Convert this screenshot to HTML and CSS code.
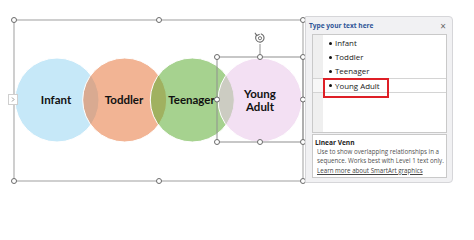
FILE: index.html
```
<!DOCTYPE html>
<html lang="en">
<head>
<meta charset="utf-8">
<title>Linear Venn SmartArt</title>
<link rel="stylesheet" href="styles.css">
</head>
<body>
<div class="stage">
  <svg class="canvas" width="474" height="216" viewBox="0 0 474 216">
    <g class="venn">
      <circle class="c-infant" cx="57" cy="100" r="42"/>
      <circle class="c-toddler" cx="124.7" cy="100" r="42"/>
      <circle class="c-teen" cx="192.3" cy="100" r="42"/>
      <circle class="c-young" cx="260" cy="100" r="42"/>
    </g>
    <g class="labels">
      <text x="56" y="104">Infant</text>
      <text x="124" y="104">Toddler</text>
      <text x="191.5" y="104">Teenager</text>
      <text x="260" y="97.5">Young</text>
      <text x="260" y="110.5">Adult</text>
    </g>
    <rect class="outer-box" x="14" y="20" width="289" height="161"/>
    <rect class="inner-box" x="217" y="57" width="86" height="85"/>
    <line class="rot-line" x1="260" y1="44" x2="260" y2="57"/>
    <g class="rot-icon">
      <path d="M256.6 35.2 A4.2 4.2 0 1 0 261.2 33.9"/>
      <path d="M255.2 33.2 L256.8 35.6 L259.2 34.4"/>
      <circle cx="260" cy="38.2" r="1.6"/>
    </g>
    <g class="handles">
      <circle cx="14" cy="20" r="2.5"/>
      <circle cx="159" cy="20" r="2.5"/>
      <circle cx="303" cy="20" r="2.5"/>
      <circle cx="14" cy="181" r="2.5"/>
      <circle cx="159" cy="181" r="2.5"/>
      <circle cx="303" cy="181" r="2.5"/>
      <circle cx="217" cy="57" r="2.5"/>
      <circle cx="260" cy="57" r="2.5"/>
      <circle cx="303" cy="57" r="2.5"/>
      <circle cx="217" cy="99.5" r="2.5"/>
      <circle cx="303" cy="99.5" r="2.5"/>
      <circle cx="217" cy="142" r="2.5"/>
      <circle cx="260" cy="142" r="2.5"/>
      <circle cx="303" cy="142" r="2.5"/>
    </g>
    <rect class="side-btn" x="8.5" y="94.5" width="9" height="10"/>
    <path class="side-chev" d="M12 97.5 L14 99.5 L12 101.5"/>
  </svg>

  <aside class="pane">
    <header class="pane-head">
      <span class="pane-title">Type your text here</span>
      <span class="pane-close">×</span>
    </header>
    <div class="text-area">
      <ul class="bullets">
        <li class="row">Infant</li>
        <li class="row">Toddler</li>
        <li class="row">Teenager</li>
        <li class="row row-active"><span class="sel">Young Adult</span></li>
      </ul>
    </div>
    <div class="desc">
      <div class="desc-title">Linear Venn</div>
      <p class="desc-text">Use to show overlapping relationships in a<br>sequence. Works best with Level 1 text only.</p>
      <a class="desc-link" href="#">Learn more about SmartArt graphics</a>
    </div>
  </aside>
</div>
</body>
</html>
```

FILE: styles.css
```
* { box-sizing: border-box; }
html, body { margin: 0; padding: 0; background: #ffffff; }
.stage { position: relative; width: 474px; height: 216px; overflow: hidden; }
.canvas { display: block; }

.venn circle { stroke: #ffffff; stroke-width: 1; fill-opacity: 0.56; }
.c-infant { fill: #9ad6f3; }
.c-toddler { fill: #e87940; }
.c-teen { fill: #60af37; }
.c-young { fill: #eac8ea; }

.labels text {
  font-family: "Lato", "Liberation Sans", sans-serif;
  font-weight: 700;
  font-size: 11.5px;
  fill: #111111;
  text-anchor: middle;
}

.outer-box { fill: none; stroke: #c3c3c3; stroke-width: 1.6; }
.inner-box { fill: none; stroke: #8f8f8f; stroke-width: 1; }
.rot-line { stroke: #8f8f8f; stroke-width: 1; }
.rot-icon path { fill: none; stroke: #6a6a6a; stroke-width: 1.1; stroke-linecap: round; stroke-linejoin: round; }
.rot-icon circle { fill: none; stroke: #6a6a6a; stroke-width: 0.9; }
.handles circle { fill: #ffffff; stroke: #6b6b6b; stroke-width: 1; }
.side-btn { fill: #ffffff; stroke: #cfcfcf; stroke-width: 1; }
.side-chev { fill: none; stroke: #8a8a8a; stroke-width: 0.9; }

.pane {
  position: absolute;
  left: 305px;
  top: 16px;
  width: 148px;
  height: 167px;
  background: #f1f1f3;
  border: 1px solid #d6d6d9;
  border-radius: 1px 4px 4px 1px;
  display: flex;
  flex-direction: column;
  padding: 0 5px 4px 6px;
  font-family: "Open Sans", "Liberation Sans", sans-serif;
}
.pane-head {
  flex: 0 0 17px;
  display: flex;
  align-items: center;
  justify-content: space-between;
  margin-left: -3px;
}
.pane-title { font-size: 6.6px; font-weight: 700; color: #2f5597; }
.pane-close { font-size: 10px; color: #666666; line-height: 1; margin-right: 1px; }

.text-area {
  flex: 0 0 99px;
  background: linear-gradient(to right, #efefef 0, #efefef 10px, #ffffff 10px);
  border: 1px solid #c9c9c9;
  padding-top: 1px;
}
.bullets { list-style: none; margin: 0; padding: 0; }
.row {
  position: relative;
  height: 14px;
  display: flex;
  align-items: center;
  padding-left: 22px;
  font-size: 7.9px;
  color: #222222;
}
.row::before {
  content: "";
  position: absolute;
  left: 15.5px;
  top: 5.5px;
  width: 3px;
  height: 3px;
  border-radius: 50%;
  background: #111111;
}
.row-active {
  height: 15px;
  border-top: 1px solid #d4d4d4;
  border-bottom: 1px solid #d4d4d4;
  background: linear-gradient(to right, #f7f7f7 0, #f7f7f7 10px, #ffffff 10px);
}
.row-active::before { top: 5px; }
.sel::after {
  content: "";
  position: absolute;
  left: 10px;
  top: -1px;
  width: 62px;
  height: 16px;
  border: 2px solid #de1f26;
}

.desc {
  margin-top: 1px;
  flex: 1 1 auto;
  background: #ffffff;
  border: 1px solid #c9c9c9;
  padding: 3px 1px 0 2px;
  color: #505050;
  white-space: nowrap;
}
.desc-title { font-size: 6.6px; font-weight: 700; color: #222222; line-height: 9px; }
.desc-text { margin: 1px 0 0 2px; font-size: 6.2px; line-height: 8.6px; }
.desc-link { display: block; margin: 1.5px 0 0 2px; font-size: 6.2px; line-height: 8px; color: #444444; text-decoration: underline; }
```
